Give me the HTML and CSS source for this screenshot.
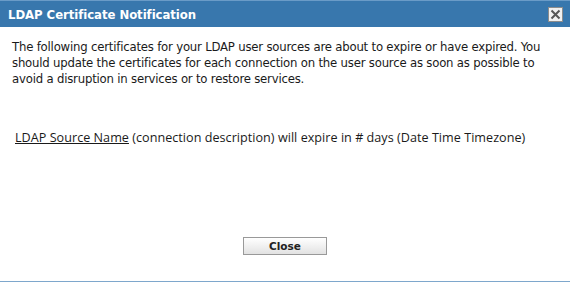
FILE: index.html
```html
<!DOCTYPE html>
<html lang="en">
  <head>
    <meta charset="UTF-8" />
    <title>LDAP Certificate Notification</title>
    <link rel="stylesheet" href="styles.css">
  </head>
  <body>
    <div class="dialog">
      <!--
        Title bar
      -->
      <header class="titlebar">
        <h1 class="title">LDAP Certificate Notification</h1>
        <button class="close-x" type="button" aria-label="Close">
          <svg width="11" height="11" viewBox="0 0 11 11" aria-hidden="true">
            <path d="M1.5 1.5 L9.5 9.5 M9.5 1.5 L1.5 9.5" stroke="#555" stroke-width="2" />
          </svg>
        </button>
      </header>

      <!--
        Body
      -->
      <section class="content">
        <p class="intro">
          The following certificates for your LDAP user sources are about to expire or have expired. You
          should update the certificates for each connection on the user source as soon as possible to
          avoid a disruption in services or to restore services.
        </p>
        <p class="source">
          <a href="#">LDAP Source Name</a> (connection description) will expire in # days (Date Time Timezone)
        </p>
      </section>

      <footer class="actions">
        <button class="btn" type="button">Close</button>
      </footer>
    </div>
  </body>
</html>
```

FILE: styles.css
```css
/*
  Global styles
*/

:root {
  --title-blue: #3877ad;
  --line-blue: #7ea7cc;
  --text: #1a1a1a;
}
* {
  margin: 0;
  padding: 0;
  box-sizing: border-box;
}
body {
  width: 570px;
  height: 282px;
  background-color: white;
  font-family: "DejaVu Sans Condensed", "DejaVu Sans", sans-serif;
}

/*
  Dialog
*/

.dialog {
  display: flex;
  flex-direction: column;
  height: 282px;
  border-bottom: 1px solid var(--line-blue);
}
.titlebar {
  display: flex;
  align-items: center;
  justify-content: space-between;
  height: 27px;
  padding: 0 7px 0 8px;
  border-top: 1px solid #6a9bc7;
  background-color: var(--title-blue);
}
.title {
  color: white;
  font-size: 13px;
  font-weight: bold;
  letter-spacing: -0.05px;
}
.close-x {
  display: flex;
  align-items: center;
  justify-content: center;
  width: 15px;
  height: 15px;
  border: 1px solid #8c8c8c;
  background-color: #f0f0f0;
}

/*
  Body
*/

.content {
  flex: 1;
  padding: 12px 12px 0;
  color: var(--text);
}
.intro {
  font-size: 13px;
  line-height: 16px;
  letter-spacing: -0.2px;
}
.source {
  margin-top: 43px;
  padding-left: 3px;
  font-family: "Open Sans", sans-serif;
  font-size: 12.6px;
  line-height: 16px;
  letter-spacing: 0.03px;
}
.source a {
  color: var(--text);
  text-decoration: underline;
}

/*
  Footer
*/

.actions {
  display: flex;
  justify-content: center;
  padding: 0 0 26px 0;
}
.btn {
  width: 84px;
  height: 18px;
  border: 1px solid #999;
  background: linear-gradient(#ffffff, #e2e2e2);
  color: #222;
  font-family: "DejaVu Sans", sans-serif;
  font-size: 10.5px;
  font-weight: bold;
}
```
